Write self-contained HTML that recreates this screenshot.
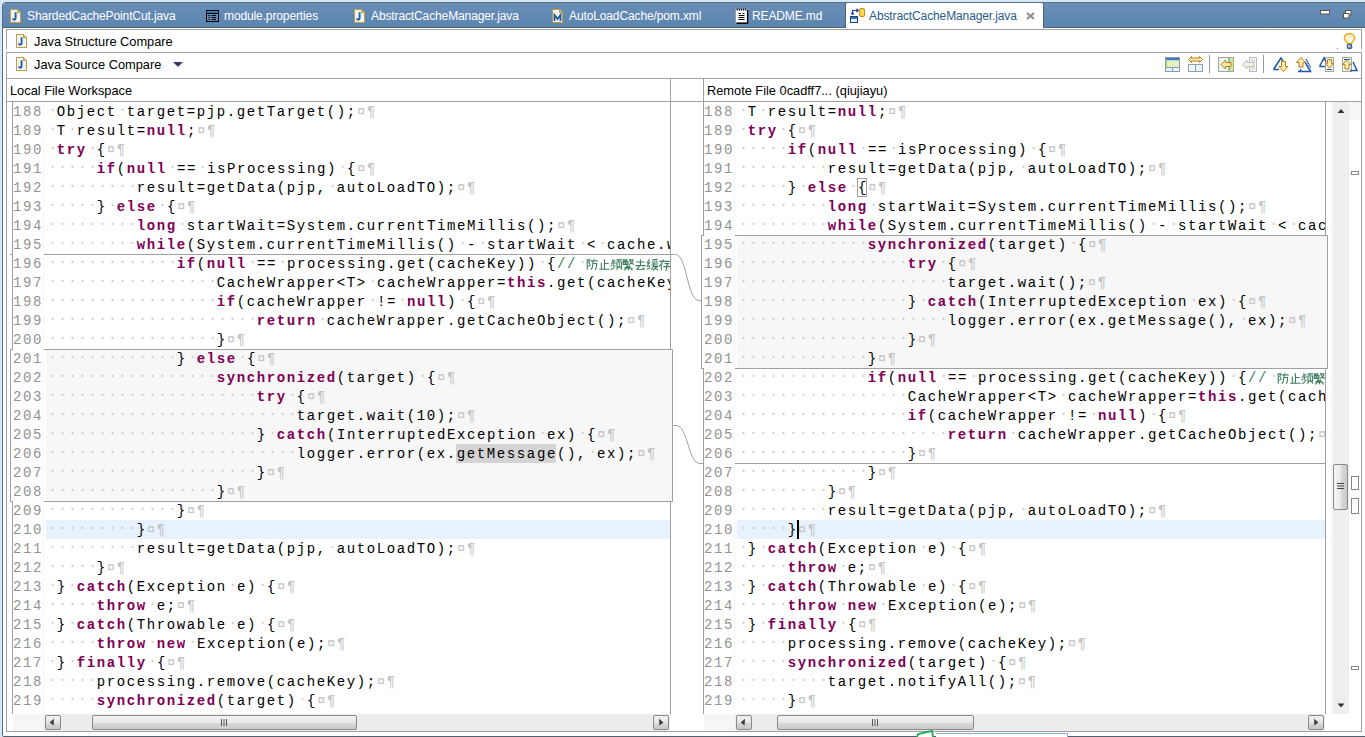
<!DOCTYPE html>
<html><head><meta charset="utf-8">
<style>
*{box-sizing:border-box}
html,body{margin:0;padding:0}
body{width:1365px;height:737px;position:relative;overflow:hidden;background:#fff;font-family:"Liberation Sans",sans-serif}
.a{position:absolute}
svg{position:absolute;overflow:visible}
.ui{position:absolute;font-family:"Liberation Sans",sans-serif;font-size:12.8px;color:#000;white-space:pre;line-height:15px}
.tab{position:absolute;font-family:"Liberation Sans",sans-serif;font-size:12px;color:#fff;white-space:pre;letter-spacing:-0.12px;line-height:14px;top:9px}
.view{position:absolute;overflow:hidden;font-family:"Liberation Mono",monospace;font-size:14px;letter-spacing:1.6px}
.ln{position:absolute;left:0;width:30px;height:19px;line-height:19px;text-align:right;color:#939393;white-space:pre}
.cl{position:absolute;left:33.8px;height:19px;line-height:19px;white-space:pre;color:#000}
.cl i{font-style:normal;color:#cbcbcb;position:relative;top:-2px;left:1.5px}
.cl u{text-decoration:none;color:#c4c4c4}
.cl b{color:#7f0055}
.cl em{font-style:normal;color:#3f7f5f}
.cjk{position:relative;left:-1.5px;display:inline-block;width:84px;height:13px;vertical-align:-3px;fill:none;stroke:#3f7f5f;stroke-width:1.05}
.g{background:#a0a0a0}
</style></head><body>
<!-- outer chrome -->
<div class="a" style="left:0;top:0;width:1365px;height:2px;background:#d4e6f9"></div>
<div class="a" style="left:0;top:0;width:2px;height:737px;background:#d4e6f9"></div>
<div class="a" style="left:2px;top:2px;width:1363px;height:735px;border-left:1px solid #5d6d7d;border-top:1px solid #5d6d7d;border-bottom:1px solid #4f6070;border-radius:4px 0 0 2px"></div>
<!-- tab bar -->
<div class="a" style="left:3px;top:3px;width:1362px;height:24px;background:linear-gradient(#6a8fb7,#5b84b0);border-top-left-radius:3px"></div>
<div class="a" style="left:3px;top:27px;width:1362px;height:1px;background:#4d6075"></div>
<!-- active tab -->
<div class="a" style="left:845px;top:3px;width:199px;height:25px;background:#fff;border-radius:2px 2px 0 0;border-right:1px solid #4d6075;border-left:1px solid #4d6075"></div>
<svg style="left:10px;top:9px" width="12" height="15"><path d="M0.5,0.5 H7.5 L10.5,3.5 V13.5 H0.5 Z" fill="#f2f5fb" stroke="#c49a38"/><path d="M7.5,0.5 V3.5 H10.5" fill="#e8c878" stroke="#c49a38"/><path d="M5.6,3.3 V8.8 Q5.6,10.7 4,10.7 Q3.1,10.7 2.8,9.4" stroke="#22609f" stroke-width="1.9" fill="none"/></svg>
<div class="tab" style="left:27px">ShardedCachePointCut.java</div>
<svg style="left:206px;top:10px" width="13" height="12"><rect x="0.5" y="0.5" width="12" height="11" fill="none" stroke="#000"/><rect x="1.5" y="1.5" width="10" height="2" fill="#1a78c8"/><path d="M1,3.5 H12 M2.5,5.5 H4 M5.5,5.5 H10 M2.5,7.5 H4 M5.5,7.5 H10 M2.5,9.5 H4 M5.5,9.5 H10" stroke="#000"/></svg>
<div class="tab" style="left:224px">module.properties</div>
<svg style="left:354px;top:9px" width="12" height="15"><path d="M0.5,0.5 H7.5 L10.5,3.5 V13.5 H0.5 Z" fill="#f2f5fb" stroke="#c49a38"/><path d="M7.5,0.5 V3.5 H10.5" fill="#e8c878" stroke="#c49a38"/><path d="M5.6,3.3 V8.8 Q5.6,10.7 4,10.7 Q3.1,10.7 2.8,9.4" stroke="#22609f" stroke-width="1.9" fill="none"/></svg>
<div class="tab" style="left:371px">AbstractCacheManager.java</div>
<svg style="left:552px;top:9px" width="12" height="15"><path d="M0.5,0.5 H7.5 L10.5,3.5 V13.5 H0.5 Z" fill="#f2f5fb" stroke="#c49a38"/><path d="M7.5,0.5 V3.5 H10.5" fill="#e8c878" stroke="#c49a38"/><path d="M2.5,12 V6 L5.5,10 L8.5,6 V12" stroke="#1d5a9a" stroke-width="1.8" fill="none"/></svg>
<div class="tab" style="left:569px">AutoLoadCache/pom.xml</div>
<svg style="left:735px;top:8px" width="14" height="16"><rect x="0.5" y="1" width="12" height="14" fill="#fff" stroke="#888" stroke-width="0.6"/><path d="M12.6,2 V15.3 H1.5" stroke="#000" stroke-width="1.4" fill="none"/><path d="M1.6,1.6 H12" stroke="#000" stroke-width="1.8" stroke-dasharray="1.2,0.9"/><path d="M3.5,5.5 H6 M7.5,5.5 H9.5 M3.5,7.5 H9.5 M3.5,9.5 H9.5 M3.5,11.5 H9.5" stroke="#000" stroke-width="1.1"/></svg>
<div class="tab" style="left:752px">README.md</div>
<svg style="left:850px;top:8px" width="16" height="16"><path d="M2.5,6 V2.5 H8" stroke="#1b4aa8" stroke-width="1.2" fill="none"/><path d="M6.8,0.8 L8.8,2.5 L6.8,4.2 Z M1,5.2 L2.5,7 L4,5.2 Z" fill="#1b4aa8" stroke="#1b4aa8" stroke-width="0.8"/><rect x="0.5" y="8.5" width="7" height="6" fill="#d8f4ff" stroke="#2a3f6e"/><rect x="1" y="9" width="6" height="2" fill="#3a6fc0"/><rect x="9.5" y="0.5" width="5" height="8" rx="1.5" fill="#f8d84a" stroke="#d08a10"/></svg>
<div class="tab" style="left:869px;color:#2b5b8c">AbstractCacheManager.java</div>
<svg style="left:1026px;top:12px" width="9" height="8"><path d="M1,1 L8,7 M8,1 L1,7" stroke="#8c8c8c" stroke-width="2"/></svg>
<svg style="left:1320px;top:10px" width="10" height="5"><rect x="0.5" y="0.5" width="9" height="3.5" fill="#fff" stroke="#5a5550"/></svg>
<svg style="left:1343px;top:10px" width="9" height="9"><rect x="2.5" y="0.5" width="5.5" height="4.5" fill="#fff" stroke="#5a5550"/><rect x="0.5" y="3.5" width="5.5" height="4.5" fill="#fff" stroke="#5a5550"/></svg>
<!-- box 1 -->
<div class="a g" style="left:6px;top:29px;width:1356px;height:1px"></div>
<div class="a g" style="left:6px;top:29px;width:1px;height:20px"></div>
<div class="a g" style="left:1361px;top:29px;width:1px;height:20px"></div>
<div class="ui" style="left:34px;top:34px">Java Structure Compare</div>
<!-- box 2 -->
<div class="a" style="left:6px;top:52px;width:1356px;height:680px;border:1px solid #a0a0a0"></div>
<div class="a g" style="left:6px;top:78px;width:1356px;height:1px"></div>
<div class="ui" style="left:34px;top:57px">Java Source Compare</div>
<!-- compare header -->
<div class="a g" style="left:6px;top:101px;width:1356px;height:1px"></div>
<div class="ui" style="left:10px;top:83px">Local File Workspace</div>
<div class="ui" style="left:707px;top:83px">Remote File 0cadff7... (qiujiayu)</div>
<svg style="left:16px;top:34px" width="12" height="15"><path d="M0.5,0.5 H7.5 L10.5,3.5 V13.5 H0.5 Z" fill="#f2f5fb" stroke="#c49a38"/><path d="M7.5,0.5 V3.5 H10.5" fill="#e8c878" stroke="#c49a38"/><path d="M5.6,3.3 V8.8 Q5.6,10.7 4,10.7 Q3.1,10.7 2.8,9.4" stroke="#22609f" stroke-width="1.9" fill="none"/></svg>
<svg style="left:16px;top:57px" width="12" height="15"><path d="M0.5,0.5 H7.5 L10.5,3.5 V13.5 H0.5 Z" fill="#f2f5fb" stroke="#c49a38"/><path d="M7.5,0.5 V3.5 H10.5" fill="#e8c878" stroke="#c49a38"/><path d="M5.6,3.3 V8.8 Q5.6,10.7 4,10.7 Q3.1,10.7 2.8,9.4" stroke="#22609f" stroke-width="1.9" fill="none"/></svg>
<svg style="left:173px;top:62px" width="10" height="5"><path d="M0,0 H10 L5,5 Z" fill="#3a3a6a"/></svg>
<svg style="left:1343px;top:33px" width="13" height="17"><defs><radialGradient id="bulbg" cx="0.5" cy="0.6" r="0.6"><stop offset="0" stop-color="#ffffff"/><stop offset="1" stop-color="#fde49a"/></radialGradient></defs><path d="M4.3,10.6 C4.3,8.6 1.3,7.8 1.3,5 C1.3,2 3.8,0.6 6.5,0.6 C9.2,0.6 11.7,2 11.7,5 C11.7,7.8 8.7,8.6 8.7,10.6 Z" fill="url(#bulbg)" stroke="#f0a820" stroke-width="1.3"/><rect x="4.3" y="11.2" width="4.4" height="4.4" rx="0.8" fill="#6d90bb" stroke="#2f5585"/><rect x="5.3" y="12.3" width="1.5" height="1.5" fill="#e8eef6"/></svg>
<div class="a" style="left:1337px;top:48px;width:1px;height:1px;background:#888;"></div>
<svg style="left:1165px;top:57px" width="15" height="15"><rect x="0.5" y="0.5" width="14" height="14" fill="#e8f6fc" stroke="#8a9ab0"/><rect x="1" y="1" width="13" height="2.5" fill="#3c7bc0"/><rect x="1" y="3.5" width="13" height="6.5" fill="#e2f0c0"/><path d="M1.5,3.5 V10" stroke="#b8e040"/><path d="M0.5,10.5 H14.5 M7.5,10.5 V14.5" stroke="#8a9ab0"/></svg>
<svg style="left:1188px;top:56px" width="15" height="16"><path d="M0.5,3.5 L3.5,0.5 V2 H11.5 V0.5 L14.5,3.5 L11.5,6.5 V5 H3.5 V6.5 Z" fill="#fff2b8" stroke="#c07a10"/><rect x="0.5" y="8.5" width="14" height="7" fill="#e8f6fc" stroke="#9aa0a0"/><path d="M7.5,8.5 V15.5" stroke="#9aa0a0"/></svg>
<div class="a" style="left:1209px;top:55px;width:1px;height:18px;background:#9a9a9a;"></div>
<svg style="left:1218px;top:57px" width="16" height="15"><rect x="0.5" y="0.5" width="15" height="14" fill="#e6f6fc" stroke="#a8a890"/><rect x="11" y="1" width="4" height="13" fill="#c8ec90"/><path d="M11,1 V14" stroke="#6080a0"/><path d="M3,7.5 L7.5,3 V5.5 H13 V9.5 H7.5 V12 Z" fill="#ffe8a0" stroke="#c07a10"/></svg>
<svg style="left:1242px;top:57px" width="15" height="15"><rect x="7.5" y="0.5" width="7" height="14" fill="#f6f6f6" stroke="#b8b8b8"/><path d="M9,3 H13 M9,5 H13 M9,10 H13 M9,12 H13" stroke="#c8c8c8"/><path d="M0.5,7.5 L5,3 V5.5 H12 V9.5 H5 V12 Z" fill="#f0f0e8" stroke="#c0c0b8"/></svg>
<div class="a" style="left:1263px;top:55px;width:1px;height:18px;background:#9a9a9a;"></div>
<svg style="left:1273px;top:57px" width="16" height="16"><path d="M0.5,12.5 L8,1 L11,6 M0.5,12.5 H6" fill="none" stroke="#1c5aa8" stroke-width="1.5"/><path d="M8.5,4.5 H12.5 V9.5 H15 L10.5,14.5 L6,9.5 H8.5 Z" fill="#ffeeb0" stroke="#c07a10"/></svg>
<svg style="left:1296px;top:57px" width="16" height="16"><path d="M2,14.5 H14.5 L9,5 M4,14.5 L5,12" fill="none" stroke="#1c5aa8" stroke-width="1.5"/><path d="M10,2 L14.5,10.5" stroke="#1c5aa8" stroke-width="1.5" stroke-dasharray="1.5,0.6"/><path d="M5,0.5 L9.5,5.5 H7 V10 H3 V5.5 H0.5 Z" fill="#ffeeb0" stroke="#c07a10"/></svg>
<svg style="left:1319px;top:57px" width="16" height="16"><rect x="6.5" y="0.5" width="8" height="14" fill="#eaf4fc" stroke="#a8a890"/><path d="M0.5,9.5 L5,1 L7,5 M0.5,9.5 H6" fill="none" stroke="#1c5aa8" stroke-width="1.5"/><path d="M8.5,2.5 H12.5 V6.5 H14.5 L10.5,11 L6.5,6.5 H8.5 Z" fill="#ffeeb0" stroke="#c07a10"/><path d="M8,12.5 H13" stroke="#1c5aa8"/></svg>
<svg style="left:1342px;top:57px" width="16" height="16"><rect x="0.5" y="0.5" width="9" height="14" fill="#eaf4fc" stroke="#a8a890"/><path d="M2,2.5 H8" stroke="#1c5aa8"/><path d="M4.5,3 L9,7.5 H7 V12 H3 V7.5 H0.5 Z" fill="#ffeeb0" stroke="#c07a10"/><path d="M8,13.5 H15 L11,5" fill="none" stroke="#1c5aa8" stroke-width="1.5"/></svg>
<div class="a" style="left:670px;top:78px;width:1px;height:271px;background:#a0a0a0;"></div>
<div class="a" style="left:670px;top:502px;width:1px;height:212px;background:#a0a0a0;"></div>
<div class="a" style="left:703px;top:78px;width:1px;height:157px;background:#a0a0a0;"></div>
<div class="a" style="left:703px;top:369px;width:1px;height:345px;background:#a0a0a0;"></div>
<div class="a" style="left:12px;top:102px;width:1px;height:247px;background:#a0a0a0;"></div>
<div class="a" style="left:12px;top:502px;width:1px;height:212px;background:#a0a0a0;"></div>
<div class="a" style="left:1325px;top:102px;width:1px;height:133px;background:#a0a0a0;"></div>
<div class="a" style="left:1325px;top:369px;width:1px;height:345px;background:#a0a0a0;"></div>
<div class="a" style="left:10px;top:254px;width:3px;height:1px;background:#a0a0a0;"></div>
<div class="a" style="left:44px;top:254px;width:627px;height:1px;background:#a0a0a0;"></div>
<div class="a" style="left:11px;top:350px;width:32px;height:151px;background:#fdfdfd;"></div>
<div class="a" style="left:46px;top:350px;width:626px;height:151px;background:#f7f7f7;"></div>
<div class="a" style="left:10px;top:349px;width:1px;height:153px;background:#a0a0a0;"></div>
<div class="a" style="left:672px;top:349px;width:1px;height:153px;background:#a0a0a0;"></div>
<div class="a" style="left:10px;top:349px;width:3px;height:1px;background:#a0a0a0;"></div>
<div class="a" style="left:44px;top:349px;width:629px;height:1px;background:#a0a0a0;"></div>
<div class="a" style="left:10px;top:501px;width:3px;height:1px;background:#a0a0a0;"></div>
<div class="a" style="left:44px;top:501px;width:629px;height:1px;background:#a0a0a0;"></div>
<div class="a" style="left:702px;top:236px;width:33px;height:132px;background:#fdfdfd;"></div>
<div class="a" style="left:737px;top:236px;width:590px;height:132px;background:#f7f7f7;"></div>
<div class="a" style="left:701px;top:235px;width:1px;height:134px;background:#a0a0a0;"></div>
<div class="a" style="left:1327px;top:235px;width:1px;height:134px;background:#a0a0a0;"></div>
<div class="a" style="left:701px;top:235px;width:3px;height:1px;background:#a0a0a0;"></div>
<div class="a" style="left:735px;top:235px;width:593px;height:1px;background:#a0a0a0;"></div>
<div class="a" style="left:701px;top:368px;width:3px;height:1px;background:#a0a0a0;"></div>
<div class="a" style="left:735px;top:368px;width:593px;height:1px;background:#a0a0a0;"></div>
<div class="a" style="left:735px;top:463px;width:591px;height:1px;background:#a0a0a0;"></div>
<div class="a" style="left:43px;top:102px;width:1px;height:612px;background:rgba(0,0,0,0.035);"></div>
<div class="a" style="left:734px;top:102px;width:1px;height:612px;background:rgba(0,0,0,0.035);"></div>
<div class="a" style="left:46px;top:520px;width:624px;height:19px;background:#e8f2fe;"></div>
<div class="a" style="left:737px;top:520px;width:588px;height:19px;background:#e8f2fe;"></div>
<div class="a" style="left:456px;top:444px;width:100px;height:19px;background:#d4d4d4;"></div>
<div class="a" style="left:857px;top:178px;width:10px;height:19px;border:1px solid #a0a0a0"></div>
<div class="view" style="left:13px;top:102px;width:657px;height:612px">
<div class="ln" style="top:1px">188</div>
<div class="cl" style="top:1px"><i>·</i>Object<i>·</i>target=pjp.getTarget();<u>¤¶</u></div>
<div class="ln" style="top:20px">189</div>
<div class="cl" style="top:20px"><i>·</i>T<i>·</i>result=<b>null</b>;<u>¤¶</u></div>
<div class="ln" style="top:39px">190</div>
<div class="cl" style="top:39px"><i>·</i><b>try</b><i>·</i>{<u>¤¶</u></div>
<div class="ln" style="top:58px">191</div>
<div class="cl" style="top:58px"><i>·····</i><b>if</b>(<b>null</b><i>·</i>==<i>·</i>isProcessing)<i>·</i>{<u>¤¶</u></div>
<div class="ln" style="top:77px">192</div>
<div class="cl" style="top:77px"><i>·········</i>result=getData(pjp,<i>·</i>autoLoadTO);<u>¤¶</u></div>
<div class="ln" style="top:96px">193</div>
<div class="cl" style="top:96px"><i>·····</i>}<i>·</i><b>else</b><i>·</i>{<u>¤¶</u></div>
<div class="ln" style="top:115px">194</div>
<div class="cl" style="top:115px"><i>·········</i><b>long</b><i>·</i>startWait=System.currentTimeMillis();<u>¤¶</u></div>
<div class="ln" style="top:134px">195</div>
<div class="cl" style="top:134px"><i>·········</i><b>while</b>(System.currentTimeMillis()<i>·</i>-<i>·</i>startWait<i>·</i>&lt;<i>·</i>cache.waitTimeOut())<i>·</i>{<u>¤¶</u></div>
<div class="ln" style="top:153px">196</div>
<div class="cl" style="top:153px"><i>·············</i><b>if</b>(<b>null</b><i>·</i>==<i>·</i>processing.get(cacheKey))<i>·</i>{<em>//<i>·</i><svg class="cjk" width="84" height="12"><path transform="translate(0.2,0.3) scale(1.04,1.04)" d="M1,1 V11 M1,1.5 H3.5 L2.5,4 L3.8,6 Q3.8,7.5 2,7.5 M7.5,0.5 V1.5 M4.5,2.5 H11 M6.5,2.5 Q6.5,9 4.5,11 M6.5,5 H10 Q10,10 8.5,11"/><path transform="translate(12.2,0.3) scale(1.04,1.04)" d="M6,1 V10.5 M6,5 H10 M3,4 V10.5 M1,10.5 H11"/><path transform="translate(24.2,0.3) scale(1.04,1.04)" d="M2.5,1 V4 M2.5,2.5 H5 M0.5,4.5 H5.5 M3,4.5 V7.5 M1,6 V8 M5,7 Q3,10.5 0.5,11 M6,1.5 H11.5 M8.5,1.5 L8,3 M6.5,3.5 H11 V8.5 H6.5 Z M8.8,4.5 V8 M7.5,9 L6,11 M10,9 L11.5,11"/><path transform="translate(36.2,0.3) scale(1.04,1.04)" d="M1.5,1 L1,3 M1.5,1.5 H5 M1,3 H5.5 V6 H1 Z M3.2,3 V6 M0.5,4.5 H6 M7.5,0.5 L7,2.5 M7,1.5 H11 M7.5,2.5 Q9,5 11.5,6 M10.5,2.5 Q9,5 6.5,6 M5.5,6.5 L3.5,8.5 H8 M7.5,7.5 L2,9.5 H10 M6,9.5 V11.5 M3.5,10.5 L2,11.5 M8.5,10.5 L10,11.5"/><path transform="translate(48.2,0.3) scale(1.04,1.04)" d="M2,3.5 H10 M6,1 V7 M1,7 H11 M5,7.5 L2.5,10.5 H9.5 M8.5,9 L10,11"/><path transform="translate(60.2,0.3) scale(1.04,1.04)" d="M3,1 L1,4.5 H3.5 M3.5,3 L1,7.5 H4 M0.5,10.5 L4,9 M6,1.5 L11,1 M6,2.5 L6.5,3.5 M8.3,2.3 V3.5 M10.5,2.2 L10,3.5 M5.5,4.5 H11.5 M5,6.5 H11.5 M7.5,4.5 Q7,9 5,11 M6.5,8 H10.5 Q9,10.5 6.5,11.5 M8,9 L11.5,11.5"/><path transform="translate(72.2,0.3) scale(1.04,1.04)" d="M1,3 H11 M5,1 Q3.5,6 0.5,8 M3,6 V11.5 M6,5 H10 L8,7 V11 Q8,11.5 6.8,11.3 M5,8 H11.5"/></svg></em></div>
<div class="ln" style="top:172px">197</div>
<div class="cl" style="top:172px"><i>·················</i>CacheWrapper&lt;T&gt;<i>·</i>cacheWrapper=<b>this</b>.get(cacheKey);<u>¤¶</u></div>
<div class="ln" style="top:191px">198</div>
<div class="cl" style="top:191px"><i>·················</i><b>if</b>(cacheWrapper<i>·</i>!=<i>·</i><b>null</b>)<i>·</i>{<u>¤¶</u></div>
<div class="ln" style="top:210px">199</div>
<div class="cl" style="top:210px"><i>·····················</i><b>return</b><i>·</i>cacheWrapper.getCacheObject();<u>¤¶</u></div>
<div class="ln" style="top:229px">200</div>
<div class="cl" style="top:229px"><i>·················</i>}<u>¤¶</u></div>
<div class="ln" style="top:248px">201</div>
<div class="cl" style="top:248px"><i>·············</i>}<i>·</i><b>else</b><i>·</i>{<u>¤¶</u></div>
<div class="ln" style="top:267px">202</div>
<div class="cl" style="top:267px"><i>·················</i><b>synchronized</b>(target)<i>·</i>{<u>¤¶</u></div>
<div class="ln" style="top:286px">203</div>
<div class="cl" style="top:286px"><i>·····················</i><b>try</b><i>·</i>{<u>¤¶</u></div>
<div class="ln" style="top:305px">204</div>
<div class="cl" style="top:305px"><i>·························</i>target.wait(10);<u>¤¶</u></div>
<div class="ln" style="top:324px">205</div>
<div class="cl" style="top:324px"><i>·····················</i>}<i>·</i><b>catch</b>(InterruptedException<i>·</i>ex)<i>·</i>{<u>¤¶</u></div>
<div class="ln" style="top:343px">206</div>
<div class="cl" style="top:343px"><i>·························</i>logger.error(ex.getMessage(),<i>·</i>ex);<u>¤¶</u></div>
<div class="ln" style="top:362px">207</div>
<div class="cl" style="top:362px"><i>·····················</i>}<u>¤¶</u></div>
<div class="ln" style="top:381px">208</div>
<div class="cl" style="top:381px"><i>·················</i>}<u>¤¶</u></div>
<div class="ln" style="top:400px">209</div>
<div class="cl" style="top:400px"><i>·············</i>}<u>¤¶</u></div>
<div class="ln" style="top:419px">210</div>
<div class="cl" style="top:419px"><i>·········</i>}<u>¤¶</u></div>
<div class="ln" style="top:438px">211</div>
<div class="cl" style="top:438px"><i>·········</i>result=getData(pjp,<i>·</i>autoLoadTO);<u>¤¶</u></div>
<div class="ln" style="top:457px">212</div>
<div class="cl" style="top:457px"><i>·····</i>}<u>¤¶</u></div>
<div class="ln" style="top:476px">213</div>
<div class="cl" style="top:476px"><i>·</i>}<i>·</i><b>catch</b>(Exception<i>·</i>e)<i>·</i>{<u>¤¶</u></div>
<div class="ln" style="top:495px">214</div>
<div class="cl" style="top:495px"><i>·····</i><b>throw</b><i>·</i>e;<u>¤¶</u></div>
<div class="ln" style="top:514px">215</div>
<div class="cl" style="top:514px"><i>·</i>}<i>·</i><b>catch</b>(Throwable<i>·</i>e)<i>·</i>{<u>¤¶</u></div>
<div class="ln" style="top:533px">216</div>
<div class="cl" style="top:533px"><i>·····</i><b>throw</b><i>·</i><b>new</b><i>·</i>Exception(e);<u>¤¶</u></div>
<div class="ln" style="top:552px">217</div>
<div class="cl" style="top:552px"><i>·</i>}<i>·</i><b>finally</b><i>·</i>{<u>¤¶</u></div>
<div class="ln" style="top:571px">218</div>
<div class="cl" style="top:571px"><i>·····</i>processing.remove(cacheKey);<u>¤¶</u></div>
<div class="ln" style="top:590px">219</div>
<div class="cl" style="top:590px"><i>·····</i><b>synchronized</b>(target)<i>·</i>{<u>¤¶</u></div>
</div>
<div class="view" style="left:704px;top:102px;width:621px;height:612px">
<div class="ln" style="top:1px">188</div>
<div class="cl" style="top:1px"><i>·</i>T<i>·</i>result=<b>null</b>;<u>¤¶</u></div>
<div class="ln" style="top:20px">189</div>
<div class="cl" style="top:20px"><i>·</i><b>try</b><i>·</i>{<u>¤¶</u></div>
<div class="ln" style="top:39px">190</div>
<div class="cl" style="top:39px"><i>·····</i><b>if</b>(<b>null</b><i>·</i>==<i>·</i>isProcessing)<i>·</i>{<u>¤¶</u></div>
<div class="ln" style="top:58px">191</div>
<div class="cl" style="top:58px"><i>·········</i>result=getData(pjp,<i>·</i>autoLoadTO);<u>¤¶</u></div>
<div class="ln" style="top:77px">192</div>
<div class="cl" style="top:77px"><i>·····</i>}<i>·</i><b>else</b><i>·</i>{<u>¤¶</u></div>
<div class="ln" style="top:96px">193</div>
<div class="cl" style="top:96px"><i>·········</i><b>long</b><i>·</i>startWait=System.currentTimeMillis();<u>¤¶</u></div>
<div class="ln" style="top:115px">194</div>
<div class="cl" style="top:115px"><i>·········</i><b>while</b>(System.currentTimeMillis()<i>·</i>-<i>·</i>startWait<i>·</i>&lt;<i>·</i>cache.waitTimeOut())<i>·</i>{<u>¤¶</u></div>
<div class="ln" style="top:134px">195</div>
<div class="cl" style="top:134px"><i>·············</i><b>synchronized</b>(target)<i>·</i>{<u>¤¶</u></div>
<div class="ln" style="top:153px">196</div>
<div class="cl" style="top:153px"><i>·················</i><b>try</b><i>·</i>{<u>¤¶</u></div>
<div class="ln" style="top:172px">197</div>
<div class="cl" style="top:172px"><i>·····················</i>target.wait();<u>¤¶</u></div>
<div class="ln" style="top:191px">198</div>
<div class="cl" style="top:191px"><i>·················</i>}<i>·</i><b>catch</b>(InterruptedException<i>·</i>ex)<i>·</i>{<u>¤¶</u></div>
<div class="ln" style="top:210px">199</div>
<div class="cl" style="top:210px"><i>·····················</i>logger.error(ex.getMessage(),<i>·</i>ex);<u>¤¶</u></div>
<div class="ln" style="top:229px">200</div>
<div class="cl" style="top:229px"><i>·················</i>}<u>¤¶</u></div>
<div class="ln" style="top:248px">201</div>
<div class="cl" style="top:248px"><i>·············</i>}<u>¤¶</u></div>
<div class="ln" style="top:267px">202</div>
<div class="cl" style="top:267px"><i>·············</i><b>if</b>(<b>null</b><i>·</i>==<i>·</i>processing.get(cacheKey))<i>·</i>{<em>//<i>·</i><svg class="cjk" width="84" height="12"><path transform="translate(0.2,0.3) scale(1.04,1.04)" d="M1,1 V11 M1,1.5 H3.5 L2.5,4 L3.8,6 Q3.8,7.5 2,7.5 M7.5,0.5 V1.5 M4.5,2.5 H11 M6.5,2.5 Q6.5,9 4.5,11 M6.5,5 H10 Q10,10 8.5,11"/><path transform="translate(12.2,0.3) scale(1.04,1.04)" d="M6,1 V10.5 M6,5 H10 M3,4 V10.5 M1,10.5 H11"/><path transform="translate(24.2,0.3) scale(1.04,1.04)" d="M2.5,1 V4 M2.5,2.5 H5 M0.5,4.5 H5.5 M3,4.5 V7.5 M1,6 V8 M5,7 Q3,10.5 0.5,11 M6,1.5 H11.5 M8.5,1.5 L8,3 M6.5,3.5 H11 V8.5 H6.5 Z M8.8,4.5 V8 M7.5,9 L6,11 M10,9 L11.5,11"/><path transform="translate(36.2,0.3) scale(1.04,1.04)" d="M1.5,1 L1,3 M1.5,1.5 H5 M1,3 H5.5 V6 H1 Z M3.2,3 V6 M0.5,4.5 H6 M7.5,0.5 L7,2.5 M7,1.5 H11 M7.5,2.5 Q9,5 11.5,6 M10.5,2.5 Q9,5 6.5,6 M5.5,6.5 L3.5,8.5 H8 M7.5,7.5 L2,9.5 H10 M6,9.5 V11.5 M3.5,10.5 L2,11.5 M8.5,10.5 L10,11.5"/><path transform="translate(48.2,0.3) scale(1.04,1.04)" d="M2,3.5 H10 M6,1 V7 M1,7 H11 M5,7.5 L2.5,10.5 H9.5 M8.5,9 L10,11"/><path transform="translate(60.2,0.3) scale(1.04,1.04)" d="M3,1 L1,4.5 H3.5 M3.5,3 L1,7.5 H4 M0.5,10.5 L4,9 M6,1.5 L11,1 M6,2.5 L6.5,3.5 M8.3,2.3 V3.5 M10.5,2.2 L10,3.5 M5.5,4.5 H11.5 M5,6.5 H11.5 M7.5,4.5 Q7,9 5,11 M6.5,8 H10.5 Q9,10.5 6.5,11.5 M8,9 L11.5,11.5"/><path transform="translate(72.2,0.3) scale(1.04,1.04)" d="M1,3 H11 M5,1 Q3.5,6 0.5,8 M3,6 V11.5 M6,5 H10 L8,7 V11 Q8,11.5 6.8,11.3 M5,8 H11.5"/></svg></em></div>
<div class="ln" style="top:286px">203</div>
<div class="cl" style="top:286px"><i>·················</i>CacheWrapper&lt;T&gt;<i>·</i>cacheWrapper=<b>this</b>.get(cacheKey);<u>¤¶</u></div>
<div class="ln" style="top:305px">204</div>
<div class="cl" style="top:305px"><i>·················</i><b>if</b>(cacheWrapper<i>·</i>!=<i>·</i><b>null</b>)<i>·</i>{<u>¤¶</u></div>
<div class="ln" style="top:324px">205</div>
<div class="cl" style="top:324px"><i>·····················</i><b>return</b><i>·</i>cacheWrapper.getCacheObject();<u>¤¶</u></div>
<div class="ln" style="top:343px">206</div>
<div class="cl" style="top:343px"><i>·················</i>}<u>¤¶</u></div>
<div class="ln" style="top:362px">207</div>
<div class="cl" style="top:362px"><i>·············</i>}<u>¤¶</u></div>
<div class="ln" style="top:381px">208</div>
<div class="cl" style="top:381px"><i>·········</i>}<u>¤¶</u></div>
<div class="ln" style="top:400px">209</div>
<div class="cl" style="top:400px"><i>·········</i>result=getData(pjp,<i>·</i>autoLoadTO);<u>¤¶</u></div>
<div class="ln" style="top:419px">210</div>
<div class="cl" style="top:419px"><i>·····</i>}<u>¤¶</u></div>
<div class="ln" style="top:438px">211</div>
<div class="cl" style="top:438px"><i>·</i>}<i>·</i><b>catch</b>(Exception<i>·</i>e)<i>·</i>{<u>¤¶</u></div>
<div class="ln" style="top:457px">212</div>
<div class="cl" style="top:457px"><i>·····</i><b>throw</b><i>·</i>e;<u>¤¶</u></div>
<div class="ln" style="top:476px">213</div>
<div class="cl" style="top:476px"><i>·</i>}<i>·</i><b>catch</b>(Throwable<i>·</i>e)<i>·</i>{<u>¤¶</u></div>
<div class="ln" style="top:495px">214</div>
<div class="cl" style="top:495px"><i>·····</i><b>throw</b><i>·</i><b>new</b><i>·</i>Exception(e);<u>¤¶</u></div>
<div class="ln" style="top:514px">215</div>
<div class="cl" style="top:514px"><i>·</i>}<i>·</i><b>finally</b><i>·</i>{<u>¤¶</u></div>
<div class="ln" style="top:533px">216</div>
<div class="cl" style="top:533px"><i>·····</i>processing.remove(cacheKey);<u>¤¶</u></div>
<div class="ln" style="top:552px">217</div>
<div class="cl" style="top:552px"><i>·····</i><b>synchronized</b>(target)<i>·</i>{<u>¤¶</u></div>
<div class="ln" style="top:571px">218</div>
<div class="cl" style="top:571px"><i>·········</i>target.notifyAll();<u>¤¶</u></div>
<div class="ln" style="top:590px">219</div>
<div class="cl" style="top:590px"><i>·····</i>}<u>¤¶</u></div>
</div>
<div class="a" style="left:797px;top:520px;width:2px;height:19px;background:#000;"></div>
<svg style="left:0;top:0" width="1365" height="737"><path d="M670,254.5 H675.5 C687,254.5 687,300.5 699,300.5 H701.5" fill="none" stroke="#a0a0a0"/><path d="M672,425.5 H676 C688,425.5 688,463.5 700,463.5 H703" fill="none" stroke="#a0a0a0"/></svg>
<div class="a" style="left:13px;top:714px;width:31px;height:17px;background:#f6f6f6;"></div>
<div class="a" style="left:44px;top:714px;width:626px;height:17px;background:#ececec;"></div>
<svg style="left:45px;top:715px" width="16" height="15"><defs><linearGradient id="bg45" x1="0" y1="0" x2="0" y2="1"><stop offset="0" stop-color="#f2f2f2"/><stop offset="0.5" stop-color="#e6e6e6"/><stop offset="0.55" stop-color="#d6d6d6"/><stop offset="1" stop-color="#c8c8c8"/></linearGradient></defs><rect x="0.5" y="0.5" width="15" height="14" rx="1.5" fill="url(#bg45)" stroke="#8a8a8a"/><path d="M9,3.8 L4.6,7.4 L8.6,10.6 Z" fill="#3a3a3a"/></svg>
<div class="a" style="left:92px;top:715px;width:265px;height:15px;border:1px solid #8a8a8a;border-radius:2px;background:linear-gradient(#f4f4f4,#e8e8e8 50%,#d8d8d8 55%,#cacaca)"></div><svg style="left:220px;top:719px" width="8" height="7"><path d="M1.5,0 V7 M4,0 V7 M6.5,0 V7" stroke="#555"/></svg>
<svg style="left:653px;top:715px" width="16" height="15"><defs><linearGradient id="bg653" x1="0" y1="0" x2="0" y2="1"><stop offset="0" stop-color="#f2f2f2"/><stop offset="0.5" stop-color="#e6e6e6"/><stop offset="0.55" stop-color="#d6d6d6"/><stop offset="1" stop-color="#c8c8c8"/></linearGradient></defs><rect x="0.5" y="0.5" width="15" height="14" rx="1.5" fill="url(#bg653)" stroke="#8a8a8a"/><path d="M6,3.8 L10.4,7.4 L6.4,10.6 Z" fill="#3a3a3a"/></svg>
<div class="a" style="left:704px;top:714px;width:31px;height:17px;background:#f6f6f6;"></div>
<div class="a" style="left:735px;top:714px;width:590px;height:17px;background:#ececec;"></div>
<svg style="left:736px;top:715px" width="16" height="15"><defs><linearGradient id="bg736" x1="0" y1="0" x2="0" y2="1"><stop offset="0" stop-color="#f2f2f2"/><stop offset="0.5" stop-color="#e6e6e6"/><stop offset="0.55" stop-color="#d6d6d6"/><stop offset="1" stop-color="#c8c8c8"/></linearGradient></defs><rect x="0.5" y="0.5" width="15" height="14" rx="1.5" fill="url(#bg736)" stroke="#8a8a8a"/><path d="M9,3.8 L4.6,7.4 L8.6,10.6 Z" fill="#3a3a3a"/></svg>
<div class="a" style="left:777px;top:715px;width:197px;height:15px;border:1px solid #8a8a8a;border-radius:2px;background:linear-gradient(#f4f4f4,#e8e8e8 50%,#d8d8d8 55%,#cacaca)"></div><svg style="left:871px;top:719px" width="8" height="7"><path d="M1.5,0 V7 M4,0 V7 M6.5,0 V7" stroke="#555"/></svg>
<svg style="left:1308px;top:715px" width="16" height="15"><defs><linearGradient id="bg1308" x1="0" y1="0" x2="0" y2="1"><stop offset="0" stop-color="#f2f2f2"/><stop offset="0.5" stop-color="#e6e6e6"/><stop offset="0.55" stop-color="#d6d6d6"/><stop offset="1" stop-color="#c8c8c8"/></linearGradient></defs><rect x="0.5" y="0.5" width="15" height="14" rx="1.5" fill="url(#bg1308)" stroke="#8a8a8a"/><path d="M6,3.8 L10.4,7.4 L6.4,10.6 Z" fill="#3a3a3a"/></svg>
<div class="a" style="left:1331px;top:102px;width:2px;height:612px;background:#f6f6f6;"></div>
<div class="a" style="left:1333px;top:102px;width:16px;height:612px;background:#eeeeee;"></div>
<svg style="left:1337px;top:108px" width="9" height="6"><path d="M0.5,5 L4,1 L7.5,5 Z" fill="#333"/></svg>
<svg style="left:1337px;top:703px" width="9" height="6"><path d="M0.5,0.5 L4,4.5 L7.5,0.5 Z" fill="#333"/></svg>
<div class="a" style="left:1333px;top:464px;width:15px;height:46px;border:1px solid #8a8a8a;border-radius:2px;background:linear-gradient(90deg,#f4f4f4,#e8e8e8 50%,#d8d8d8 55%,#cacaca)"></div>
<svg style="left:1337px;top:482px" width="8" height="8"><path d="M0,1.5 H7 M0,4 H7 M0,6.5 H7" stroke="#444"/></svg>
<div class="a" style="left:1349px;top:102px;width:12px;height:18px;background:#f6f6f6;"></div>
<div class="a" style="left:1351px;top:171px;width:8px;height:4px;border:1px solid #888;background:#fff"></div>
<div class="a" style="left:1351px;top:476px;width:8px;height:14px;border:1px solid #888;background:#fff"></div>
<div class="a" style="left:1351px;top:498px;width:8px;height:16px;border:1px solid #888;background:#fff"></div>
<div class="a" style="left:1351px;top:666px;width:8px;height:4px;border:1px solid #888;background:#fff"></div>
<div class="a" style="left:936px;top:733px;width:132px;height:4px;background:#fff;border-top:1px solid #8aaee0;border-right:1px solid #8aaee0"></div>
<svg style="left:914px;top:731px" width="22" height="6"><path d="M3,6 L4,3 L18,0 L19,6" fill="#fff" stroke="#2cb05a" stroke-width="2"/></svg>
</body></html>
